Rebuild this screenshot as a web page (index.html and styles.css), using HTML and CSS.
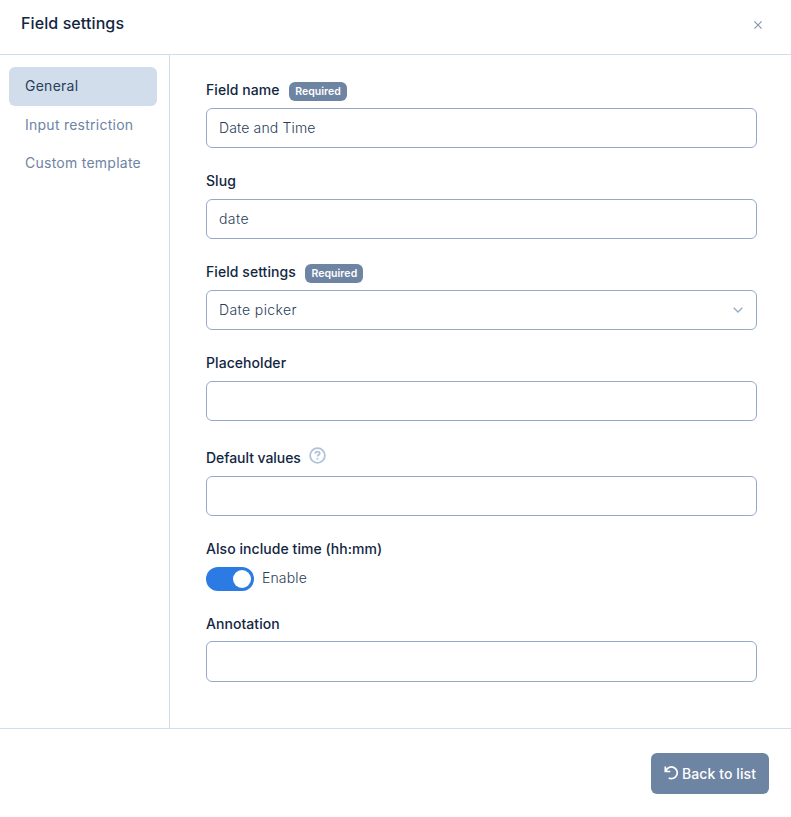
FILE: index.html
```html
<!DOCTYPE html>
<html lang="en">
<head>
<meta charset="utf-8">
<title>Field settings</title>
<link rel="stylesheet" href="styles.css">
</head>
<body>
<div class="modal">
  <header class="modal-header">
    <h1 class="title">Field settings</h1>
    <button class="close" aria-label="Close"><svg width="8" height="8" viewBox="0 0 8 8"><path d="M.4.4l7.2 7.2M7.6.4L.4 7.6"/></svg></button>
  </header>
  <div class="modal-body">
    <nav class="tabs">
      <a class="tab active">General</a>
      <a class="tab">Input restriction</a>
      <a class="tab">Custom template</a>
    </nav>
    <form class="form">
      <div class="group">
        <label class="label">Field name<span class="badge">Required</span></label>
        <div class="control">Date and Time</div>
      </div>
      <div class="group">
        <label class="label">Slug</label>
        <div class="control value-wide">date</div>
      </div>
      <div class="group">
        <label class="label">Field settings<span class="badge">Required</span></label>
        <div class="control value-wide select"><span>Date picker</span><svg class="chevron" width="10" height="6" viewBox="0 0 10 6"><path d="M.7.7L5 5 9.300.7"/></svg></div>
      </div>
      <div class="group">
        <label class="label">Placeholder</label>
        <div class="control"></div>
      </div>
      <div class="group defaults">
        <label class="label">Default values<svg class="help" width="17" height="17" viewBox="0 0 17 17"><circle cx="8.500" cy="8.500" r="7.400"/><path d="M6.300 6.700c0-1.300 1-2.100 2.200-2.100s2.200.8 2.200 1.900c0 1.500-2.200 1.400-2.200 3"/><path d="M8.500 10.900v1.700"/></svg></label>
        <div class="control"></div>
      </div>
      <div class="group toggle-group">
        <label class="label">Also include time (hh:mm)</label>
        <div class="toggle-row"><span class="toggle"><span class="knob"></span></span><span class="enable">Enable</span></div>
      </div>
      <div class="group last">
        <label class="label">Annotation</label>
        <div class="control"></div>
      </div>
    </form>
  </div>
  <footer class="modal-footer">
    <button class="back"><svg width="16" height="14" viewBox="0 0 16 14"><path d="M1.300.5v5h5M1.900 5A5.800 5.800 0 1 1 4.700 11.900"/></svg><span>Back to list</span></button>
  </footer>
</div>
</body>
</html>
```
FILE: styles.css
```css
* { box-sizing: border-box; }
body {
  margin: 0;
  background: #fff;
  color: #12263f;
  font: 400 14px/22px Inter, "Liberation Sans", sans-serif;
}
.modal { height: 817px; display: flex; flex-direction: column; }
.modal-header {
  height: 55px;
  flex: none;
  display: flex;
  justify-content: space-between;
  padding: 12px 29px 0 21px;
  border-bottom: 1px solid #d2ddec;
}
.title { margin: 0; font-size: 16px; line-height: 22px; font-weight: 500; letter-spacing: .1px; }
button { border: 0; padding: 0; font: inherit; }
.close { display: flex; width: 8px; height: 8px; margin-top: 9px; background: none; }
svg { display: block; flex: none; fill: none; }
.close svg { stroke: #8492ad; stroke-width: 1.1; }
.modal-body { height: 673px; flex: none; display: flex; }
.tabs {
  width: 170px;
  flex: none;
  padding: 12px 12px 0 9px;
  border-right: 1px solid #d2ddec;
}
.tab {
  display: flex;
  align-items: center;
  height: 38px;
  padding-left: 16px;
  border-radius: 6px;
  color: #6e84a3;
  letter-spacing: .25px;
}
.tab.active { height: 39px; padding-bottom: 1px; background: #d2ddec; color: #283e59; }
.form { flex: 1; padding: 24px 34px 0 36px; }
.group { height: 91px; }
.label {
  display: flex;
  align-items: center;
  height: 22px;
  margin-bottom: 7px;
  font-weight: 450;
  letter-spacing: .06px;
}
.badge {
  height: 19px;
  width: 58px;
  margin: 2px 0 0 9.500px;
  border-radius: 6px;
  background: #6e84a3;
  color: #fff;
  font-size: 10.500px;
  line-height: 19px;
  font-weight: 600;
  text-align: center;
}
.control {
  display: flex;
  align-items: center;
  height: 40px;
  padding: 0 12px;
  border: 1px solid #95aac9;
  border-radius: 6px;
  color: #283e59;
  font-weight: 350;
  letter-spacing: .15px;
}
.value-wide { letter-spacing: .4px; }
.select { justify-content: space-between; padding-right: 13px; }
.chevron { stroke: #95aac9; stroke-width: 1.300; }
.defaults { height: 95px; padding-top: 4px; }
.defaults .label { letter-spacing: -.06px; }
.help { margin: -5px 0 0 8px; stroke: #b1c2d9; stroke-width: 1.800; }
.toggle-group { height: 75px; }
.toggle-group .label { margin-bottom: 0; }
.toggle-row { display: flex; align-items: center; padding-top: 7px; color: #283e59; font-weight: 350; letter-spacing: .15px; }
.enable { margin-top: -2px; }
.toggle {
  display: flex;
  justify-content: flex-end;
  width: 48px;
  height: 24px;
  padding: 3px;
  margin-right: 8px;
  border-radius: 12px;
  background: #2c7be5;
}
.knob { width: 18px; height: 18px; border-radius: 50%; background: #fff; }
.last .label { margin-bottom: 6px; }
.last .control { height: 41px; }
.modal-footer {
  flex: 1;
  display: flex;
  justify-content: flex-end;
  padding: 24px 22px 0;
  border-top: 1px solid #d2ddec;
}
.back {
  display: flex;
  align-items: center;
  justify-content: center;
  gap: 2px;
  width: 118px;
  height: 41px;
  border-radius: 6px;
  background: #6e84a3;
  color: #fff;
  font-weight: 500;
  letter-spacing: .1px;
}
.back svg { margin-top: -2px; stroke: #fff; stroke-width: 1.700; }
```
